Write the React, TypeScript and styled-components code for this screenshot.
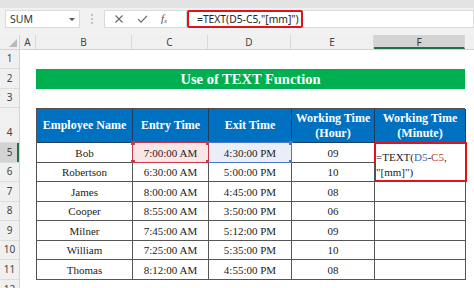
import React from "react";
import styled, { createGlobalStyle } from "styled-components";

const Global = createGlobalStyle`
  html, body { margin: 0; padding: 0; background: #ffffff; }
  body { width: 474px; height: 288px; overflow: hidden; }
  * { box-sizing: border-box; }
`;

const UI = `"Noto Sans", "Open Sans", "Liberation Sans", sans-serif`;
const SERIF = `"Liberation Serif", "Times New Roman", serif`;

const Page = styled.div`
  width: 474px;
  height: 288px;
  display: flex;
  flex-direction: column;
  overflow: hidden;
  background: #ffffff;
`;

const TopStrip = styled.div`
  height: 8px;
  background: #e3e3e3;
  flex: none;
`;

const FormulaBar = styled.div`
  height: 27px;
  flex: none;
  background: #f1f1f1;
  display: flex;
  align-items: flex-start;
  padding-top: 2px;
  font-family: ${UI};
`;

const NameBox = styled.div`
  margin-left: 5px;
  width: 75px;
  height: 18px;
  background: #ffffff;
  border: 1px solid #dadada;
  display: flex;
  align-items: center;
  justify-content: space-between;
  padding: 0 4px 0 4px;
  font-size: 10.5px;
  color: #333;
`;

const Caret = styled.span`
  width: 0;
  height: 0;
  border-left: 3px solid transparent;
  border-right: 3px solid transparent;
  border-top: 3px solid #555;
`;

const Grip = styled.div`
  width: 24px;
  height: 18px;
  display: flex;
  flex-direction: column;
  align-items: center;
  justify-content: center;
  gap: 2px;
  span {
    width: 2px;
    height: 2px;
    border-radius: 50%;
    background: #b5b5b5;
  }
`;

const ButtonBox = styled.div`
  width: 82px;
  height: 18px;
  background: #ffffff;
  border: 1px solid #dadada;
  border-right: none;
  display: flex;
  align-items: center;
  padding-left: 9px;
  gap: 13px;
`;

const Fx = styled.span`
  font-family: ${SERIF};
  font-style: italic;
  font-size: 11px;
  color: #555;
  line-height: 1;
  sub { font-size: 7px; vertical-align: -1px; }
`;

const FormulaInput = styled.div`
  flex: 1;
  height: 18px;
  background: #ffffff;
  border: 1px solid #dadada;
  display: flex;
  align-items: stretch;
`;

const FormulaHighlight = styled.div`
  width: 116px;
  margin: -1px 0 -1px 0;
  border: 2px solid #e0121c;
  border-radius: 2px;
  display: flex;
  align-items: center;
  padding-left: 8px;
  font-size: 10.3px;
  color: #222;
  white-space: nowrap;
`;

const Sheet = styled.div`
  flex: 1;
  display: flex;
  flex-direction: column;
  min-height: 0;
`;

const HeaderRow = styled.div`
  height: 15px;
  flex: none;
  display: flex;
  background: #f0f0f0;
  border-bottom: 1px solid #d4d4d4;
  font-family: ${UI};
  font-size: 10px;
  color: #444;
`;

const Corner = styled.div`
  width: 20px;
  flex: none;
  position: relative;
  border-right: 1px solid #d4d4d4;
  &::after {
    content: "";
    position: absolute;
    right: 2px;
    bottom: 2px;
    width: 0;
    height: 0;
    border-left: 8px solid transparent;
    border-bottom: 8px solid #b9b9b9;
  }
`;

const ColHead = styled.div<{ $w: number; $active?: boolean }>`
  width: ${(p) => p.$w}px;
  flex: none;
  display: flex;
  align-items: center;
  justify-content: center;
  border-right: 1px solid #d9d9d9;
  background: ${(p) => (p.$active ? "#d3d3d3" : "transparent")};
  border-bottom: ${(p) => (p.$active ? "2px solid #217346" : "none")};
  color: ${(p) => (p.$active ? "#333" : "#444")};
  padding-top: ${(p) => (p.$active ? "2px" : "0")};
`;

const Body = styled.div`
  flex: 1;
  display: flex;
  min-height: 0;
  overflow: hidden;
`;

const RowHeads = styled.div`
  width: 20px;
  flex: none;
  display: flex;
  flex-direction: column;
  overflow: hidden;
  background: #f0f0f0;
  border-right: 1px solid #d4d4d4;
  font-family: ${UI};
  font-size: 10px;
  color: #444;
`;

const RowHead = styled.div<{ $h: number; $active?: boolean }>`
  height: ${(p) => p.$h}px;
  flex: none;
  display: flex;
  align-items: flex-end;
  justify-content: center;
  padding-bottom: 3px;
  border-bottom: 1px solid #dcdcdc;
  background: ${(p) => (p.$active ? "#d3d3d3" : "transparent")};
  box-shadow: ${(p) => (p.$active ? "inset -2px 0 0 #217346" : "none")};
`;

const Content = styled.div`
  flex: 1;
  display: flex;
  flex-direction: column;
  padding-left: 16px;
`;

const Spacer = styled.div<{ $h: number }>`
  height: ${(p) => p.$h}px;
  flex: none;
`;

const Banner = styled.div`
  width: 429px;
  height: 20px;
  flex: none;
  background: #00b050;
  color: #ffffff;
  font-family: ${SERIF};
  font-weight: bold;
  font-size: 14.5px;
  display: flex;
  align-items: center;
  justify-content: center;
`;

const Table = styled.div`
  width: 429px;
  flex: none;
  display: grid;
  grid-template-columns: 96px 76px 83px 83px 91px;
  grid-template-rows: 34px 20px 19px 20px 19px 20px 19px 20px;
  border-top: 1px solid #4f4f4f;
  border-left: 1px solid #4f4f4f;
  font-family: ${SERIF};
`;

const HeadCell = styled.div`
  background: #0070c0;
  color: #ffffff;
  font-weight: bold;
  font-size: 12px;
  line-height: 15px;
  text-align: center;
  display: flex;
  align-items: center;
  justify-content: center;
  border-right: 1px solid #1d3f63;
  border-bottom: 1px solid #1d3f63;
`;

const Cell = styled.div<{ $bg?: string }>`
  position: relative;
  background: ${(p) => p.$bg || "#ffffff"};
  color: #222;
  font-size: 11px;
  display: flex;
  align-items: center;
  justify-content: center;
  border-right: 1px solid #555;
  border-bottom: 1px solid #555;
`;

const RefBox = styled.div<{ $c: string; $hideLeft?: boolean }>`
  position: absolute;
  inset: -1px -1px -1px -1px;
  border: 1px solid ${(p) => p.$c};
  border-left-color: ${(p) => (p.$hideLeft ? "transparent" : p.$c)};
  pointer-events: none;
`;

const Handle = styled.span<{ $c: string; $x: "l" | "r"; $y: "t" | "b" }>`
  position: absolute;
  width: 4px;
  height: 4px;
  background: ${(p) => p.$c};
  ${(p) => (p.$x === "l" ? "left: -2px;" : "right: -2px;")}
  ${(p) => (p.$y === "t" ? "top: -2px;" : "bottom: -2px;")}
`;

const FormulaCell = styled.div`
  grid-row: span 2;
  position: relative;
  background: #ffffff;
  border-right: 1px solid #555;
  border-bottom: 1px solid #555;
  font-size: 11px;
  line-height: 15px;
  color: #222;
  padding: 7px 0 0 1px;
  white-space: nowrap;
`;

const Annotation = styled.div`
  position: absolute;
  inset: -1px -2px -1px -1px;
  border: 2px solid #e0121c;
  pointer-events: none;
`;

const Ref = styled.span<{ $c: string }>`
  color: ${(p) => p.$c};
`;

const XIcon = () => (
  <svg width="10" height="10" viewBox="0 0 10 10">
    <path d="M1.5 1.5 L8.5 8.5 M8.5 1.5 L1.5 8.5" stroke="#666" strokeWidth="1.1" fill="none" />
  </svg>
);

const CheckIcon = () => (
  <svg width="11" height="10" viewBox="0 0 11 10">
    <path d="M1 5.2 L4 8.2 L10 1.8" stroke="#666" strokeWidth="1.2" fill="none" />
  </svg>
);

const cols = [
  { l: "A", w: 16 },
  { l: "B", w: 96 },
  { l: "C", w: 76 },
  { l: "D", w: 83 },
  { l: "E", w: 83 },
  { l: "F", w: 91, active: true },
];

const rowHeights = [19, 20, 19, 35, 20, 19, 20, 19, 20, 19, 20, 20];

const data = [
  ["Bob", "7:00:00 AM", "4:30:00 PM", "09"],
  ["Robertson", "6:30:00 AM", "5:00:00 PM", "10"],
  ["James", "8:00:00 AM", "4:45:00 PM", "08"],
  ["Cooper", "8:55:00 AM", "3:50:00 PM", "06"],
  ["Milner", "7:45:00 AM", "5:12:00 PM", "09"],
  ["William", "7:25:00 AM", "5:35:00 PM", "10"],
  ["Thomas", "8:12:00 AM", "4:55:00 PM", "08"],
];

const RED = "#c8374a";
const BLUE = "#4a78c8";

export default function App() {
  return (
    <Page>
      <Global />
      <TopStrip />
      <FormulaBar>
        <NameBox>
          <span>SUM</span>
          <Caret />
        </NameBox>
        <Grip>
          <span />
          <span />
          <span />
        </Grip>
        <ButtonBox>
          <XIcon />
          <CheckIcon />
          <Fx>
            f<sub>x</sub>
          </Fx>
        </ButtonBox>
        <FormulaInput>
          <FormulaHighlight>=TEXT(D5-C5,"[mm]")</FormulaHighlight>
        </FormulaInput>
      </FormulaBar>
      <Sheet>
        <HeaderRow>
          <Corner />
          {cols.map((c) => (
            <ColHead key={c.l} $w={c.w} $active={c.active}>
              {c.l}
            </ColHead>
          ))}
        </HeaderRow>
        <Body>
          <RowHeads>
            {rowHeights.map((h, i) => (
              <RowHead key={i} $h={h} $active={i === 4}>
                {i + 1}
              </RowHead>
            ))}
          </RowHeads>
          <Content>
            <Spacer $h={19} />
            <Banner>Use of TEXT Function</Banner>
            <Spacer $h={19} />
            <Table>
              <HeadCell>Employee Name</HeadCell>
              <HeadCell>Entry Time</HeadCell>
              <HeadCell>Exit Time</HeadCell>
              <HeadCell>
                Working Time
                <br />
                (Hour)
              </HeadCell>
              <HeadCell>
                Working Time
                <br />
                (Minute)
              </HeadCell>
              {data.map((r, i) => (
                <React.Fragment key={r[0]}>
                  <Cell>{r[0]}</Cell>
                  <Cell $bg={i === 0 ? "#fbe6e6" : undefined}>
                    {r[1]}
                    {i === 0 && (
                      <RefBox $c={RED}>
                        <Handle $c={RED} $x="l" $y="t" />
                        <Handle $c={RED} $x="r" $y="t" />
                        <Handle $c={RED} $x="l" $y="b" />
                        <Handle $c={RED} $x="r" $y="b" />
                      </RefBox>
                    )}
                  </Cell>
                  <Cell $bg={i === 0 ? "#e9eef8" : undefined}>
                    {r[2]}
                    {i === 0 && (
                      <RefBox $c={BLUE} $hideLeft>
                        <Handle $c={BLUE} $x="r" $y="t" />
                        <Handle $c={BLUE} $x="r" $y="b" />
                      </RefBox>
                    )}
                  </Cell>
                  <Cell>{r[3]}</Cell>
                  {i === 0 && (
                    <FormulaCell>
                      =TEXT(<Ref $c="#3a63b0">D5</Ref>-<Ref $c="#c0392b">C5</Ref>,
                      <br />
                      "[mm]")
                      <Annotation />
                    </FormulaCell>
                  )}
                  {i > 1 && <Cell />}
                </React.Fragment>
              ))}
            </Table>
          </Content>
        </Body>
      </Sheet>
    </Page>
  );
}
